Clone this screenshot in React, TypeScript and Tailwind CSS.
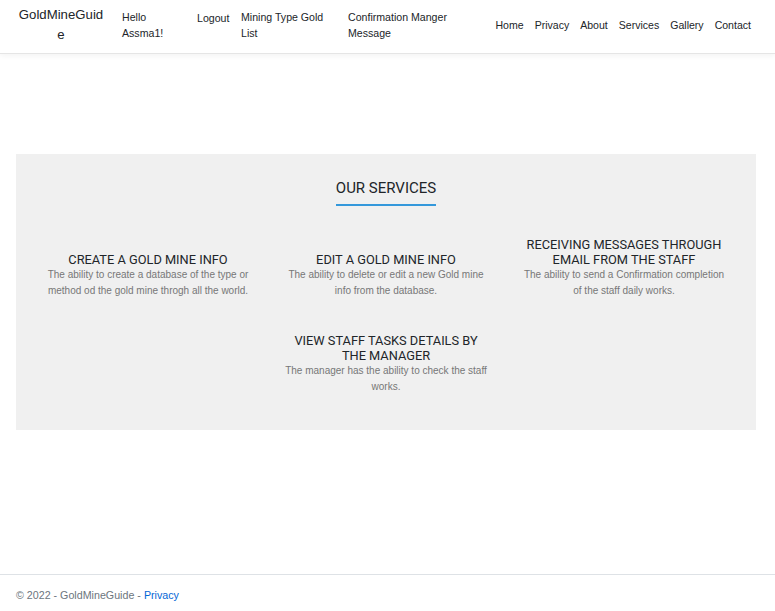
const services = [
  {
    title: "CREATE A GOLD MINE INFO",
    text: "The ability to create a database of the type or method od the gold mine throgh all the world.",
  },
  {
    title: "EDIT A GOLD MINE INFO",
    text: "The ability to delete or edit a new Gold mine info from the database.",
  },
  {
    title: "RECEIVING MESSAGES THROUGH EMAIL FROM THE STAFF",
    text: "The ability to send a Confirmation completion of the staff daily works.",
  },
];

function ServiceCard({ title, text }: { title: string; text: string }) {
  return (
    <div className="flex flex-col items-center px-[15px] text-center">
      <h4 className="font-['Roboto',sans-serif] text-[12.8px] leading-[15px] font-normal text-[#212529]">
        {title}
      </h4>
      <p className="text-[10px] leading-[16px] text-[#777777]">{text}</p>
    </div>
  );
}

export default function App() {
  return (
    <div className="flex min-h-[611px] flex-col bg-white font-['Liberation_Sans',Arial,sans-serif] text-[#212529]">
      <header className="flex h-[54px] items-center border-b border-[#e5e5e5] pb-[4px] pl-[16px] pr-[24px] shadow-[0_2px_6px_rgba(0,0,0,0.05)]">
        <a className="w-[90px] text-center text-[13.2px] leading-[20px] [overflow-wrap:anywhere]">GoldMineGuide</a>
        <nav className="ml-[16px] flex flex-1 items-start text-[10.6px] leading-[16px]">
          <a className="w-[75px] pr-[25px]">Hello Assma1!</a>
          <a className="w-[44px] pt-[1px]">Logout</a>
          <a className="w-[107px] pr-[15px]">Mining Type Gold List</a>
          <a className="w-[120px]">Confirmation Manger Message</a>
        </nav>
        <nav className="flex items-center gap-[11px] text-[10.55px] leading-[16px]">
          <a>Home</a>
          <a>Privacy</a>
          <a>About</a>
          <a>Services</a>
          <a>Gallery</a>
          <a>Contact</a>
        </nav>
      </header>

      <main className="pl-[16px] pr-[19px] pt-[100px]">
        <section className="flex h-[276px] flex-col bg-[#f0f0f0] px-[13px]">
          <div className="flex justify-center pt-[26px]">
            <h2 className="border-b-2 border-[#3498db] pb-[8px] font-['Roboto',sans-serif] text-[15px] leading-[16px] font-normal text-[#212529]">
              OUR SERVICES
            </h2>
          </div>
          <div className="mt-[31px] grid grid-cols-3 items-end">
            {services.map((s) => (
              <ServiceCard key={s.title} title={s.title} text={s.text} />
            ))}
          </div>
          <div className="mt-[34px] grid grid-cols-3">
            <div className="col-start-2">
              <ServiceCard
                title="VIEW STAFF TASKS DETAILS BY THE MANAGER"
                text="The manager has the ability to check the staff works."
              />
            </div>
          </div>
        </section>
      </main>

      <footer className="mt-[144px] border-t border-[#dee2e6] px-[16px] pt-[12px] text-[10.7px] leading-[16px] text-[#6c757d]">
        © 2022 - GoldMineGuide - <a className="text-[#0366d6]">Privacy</a>
      </footer>
    </div>
  );
}
